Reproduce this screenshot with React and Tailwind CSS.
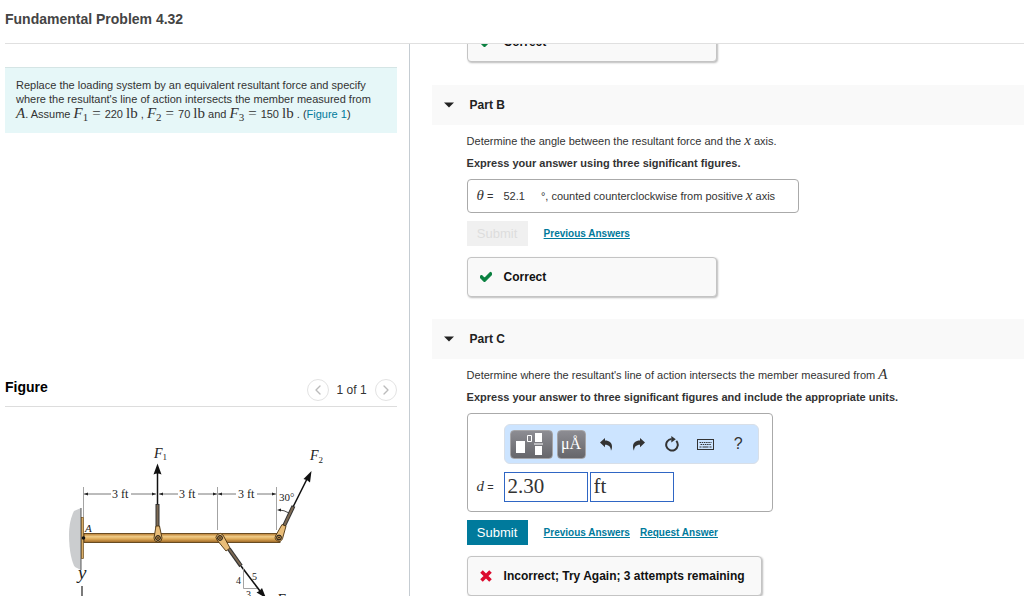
import { useState } from "react";
import { FaCheck } from "react-icons/fa";
import { ChevronLeft, ChevronRight } from "lucide-react";

const M = ({ children, sub }) => (
  <span className="font-['Liberation_Serif',serif] text-[15px] leading-none">
    <i>{children}</i>
    {sub && <sub className="text-[11px] leading-none">{sub}</sub>}
  </span>
);

const Eq = () => <span className="mx-1 font-['Liberation_Serif',serif] text-[15px] leading-none">=</span>;

const Lb = () => <span className="font-['Liberation_Serif',serif] text-[15px] leading-none">lb</span>;

function PartHeader({ title }) {
  const [open, setOpen] = useState(true);
  return (
    <button
      type="button"
      aria-expanded={open}
      onClick={() => setOpen(!open)}
      className="flex h-10 w-full items-center gap-4 bg-[#f9f9f9] pl-3 text-left text-[12px] font-bold text-[#222]"
    >
      <svg viewBox="0 0 10 6" className="h-[6px] w-[10px]" aria-hidden="true">
        <path d="M0 0.5h10L5 5.5z" fill="#222" />
      </svg>
      {title}
    </button>
  );
}

function Feedback({ ok, className, children }) {
  return (
    <div
      className={`flex h-10 items-center gap-3 rounded border border-[#c4c4c4] bg-[#f9f9f9] pl-3 text-[12px] font-bold text-[#111] shadow-[1px_1px_2px_#bbb] ${className}`}
    >
      {ok ? (
        <FaCheck className="h-3 w-3 text-[#0a8040]" stroke="currentColor" strokeWidth="50" />
      ) : (
        <svg viewBox="0 0 12 12" className="h-3 w-3" aria-hidden="true">
          <path d="M1.5 1.5l9 9M10.5 1.5l-9 9" stroke="#dc0a2d" strokeWidth="3.6" />
        </svg>
      )}
      <span>{children}</span>
    </div>
  );
}

const linkClass = "text-[10px] font-bold text-[#007a9c] underline";

function Dim({ x1, x2, label, tx, gap }) {
  return (
    <g>
      <path d={`M${x1} 494H${gap[0]}M${gap[1]} 494H${x2}`} stroke="#555" strokeWidth="0.8" />
      <path d={`M${x1} 494l4 -1.6v3.2zM${x2} 494l-4 -1.6v3.2z`} fill="#222" />
      <text x={tx} y="498" fontSize="12">{label}</text>
    </g>
  );
}

function BeamFigure() {
  return (
    <svg
      width="392"
      height="220"
      viewBox="5 407 392 220"
      className="block font-['Liberation_Serif',serif]"
      fill="#222"
      role="img"
      aria-label="Beam with three applied forces"
    >
      <defs>
        <linearGradient id="beam" x1="0" y1="0" x2="0" y2="1">
          <stop offset="0" stopColor="#b5782c" />
          <stop offset="0.35" stopColor="#f0cc88" />
          <stop offset="0.6" stopColor="#dfab59" />
          <stop offset="1" stopColor="#9a6424" />
        </linearGradient>
      </defs>
      <path d="M81 508l-7 3c-3 6-5 14-5 24 0 16 3 28 6 32l6 3z" fill="#cbcdcf" />
      <path d="M81 508v62" stroke="#333" strokeWidth="0.8" />
      <rect x="81.5" y="517.5" width="2" height="41" fill="#d9ad66" stroke="#6b4a1c" strokeWidth="0.7" />
      <path d="M83.5 487v30M217.5 487v43M276.5 487v43" stroke="#999" strokeWidth="0.9" />
      <rect x="84" y="533.5" width="196" height="9" fill="url(#beam)" stroke="#5d4018" strokeWidth="0.9" />
      <circle cx="83.5" cy="538" r="1.8" fill="#111" />
      <text x="85" y="532" fontSize="11" fontStyle="italic">A</text>

      <Dim x1={84} x2={156} gap={[111, 131]} tx={112} label="3 ft" />
      <Dim x1={159} x2={217} gap={[178, 198]} tx={179} label="3 ft" />
      <Dim x1={218} x2={276} gap={[236, 257]} tx={238} label="3 ft" />

      <path d="M157.5 505V472" stroke="#111" strokeWidth="1.5" />
      <path d="M157.5 463.5l4 11q-4 -2 -8 0z" fill="#111" />
      <path d="M157.5 504v24" stroke="#333" strokeWidth="4" />
      <path d="M157.5 505v22" stroke="#7d6a54" strokeWidth="2" />
      <path d="M156 526h3.5l2.500 12a3.700 3.700 0 0 1-8 0z" fill="#e9bd79" stroke="#49310f" strokeWidth="0.9" />
      <circle cx="158" cy="538" r="2.4" fill="#b98a48" stroke="#111" strokeWidth="1" />
      <circle cx="158" cy="538" r="0.8" fill="#111" />

      <path d="M241 566l19 25" stroke="#111" strokeWidth="1.6" />
      <path d="M266 598l-9.500-5.500q3.500-1.500 5.500-4.500z" fill="#111" />
      <path d="M229 549l12 17" stroke="#333" strokeWidth="4" />
      <path d="M229 549l11.500 16" stroke="#7d6a54" strokeWidth="2" />
      <path d="M217 540a3.700 3.700 0 0 1 6-5l7 13-4 3z" fill="#e9bd79" stroke="#49310f" strokeWidth="0.9" />
      <circle cx="220" cy="538" r="2.4" fill="#b98a48" stroke="#111" strokeWidth="1" />
      <circle cx="220" cy="538" r="0.8" fill="#111" />
      <path d="M243.500 568v20.500H257" fill="none" stroke="#999" strokeWidth="0.9" />

      <path d="M293 507l14-28" stroke="#111" strokeWidth="1.6" />
      <path d="M311.500 471l-1.500 11.500q-2.500-3-6.500-3.500z" fill="#111" />
      <path d="M284 526l9.500-20" stroke="#333" strokeWidth="4" />
      <path d="M284.500 525l8.500-18" stroke="#7d6a54" strokeWidth="2" />
      <path d="M275.500 536l6.500-11.500 4 1.700-3.500 12.500a3.700 3.700 0 0 1-7-2.700z" fill="#e9bd79" stroke="#49310f" strokeWidth="0.9" />
      <circle cx="279" cy="537.500" r="2.4" fill="#b98a48" stroke="#111" strokeWidth="1" />
      <circle cx="279" cy="537.500" r="0.8" fill="#111" />
      <path d="M289 513q-5-3-10-3" fill="none" stroke="#333" strokeWidth="0.9" />
      <path d="M277 510l4-1.600v3.200z" />

      <text x="279" y="501" fontSize="11">30°</text>
      <text x="154" y="458" fontSize="14"><tspan fontStyle="italic">F</tspan><tspan fontSize="9" dy="2">1</tspan></text>
      <text x="310" y="460" fontSize="14"><tspan fontStyle="italic">F</tspan><tspan fontSize="9" dy="3">2</tspan></text>
      <text x="277" y="604" fontSize="14"><tspan fontStyle="italic">F</tspan><tspan fontSize="9" dy="3">3</tspan></text>
      <text x="236" y="584" fontSize="10">4</text>
      <text x="252" y="580" fontSize="10">5</text>
      <text x="246" y="598" fontSize="10">3</text>
      <text x="78" y="579" fontSize="19" fontStyle="italic">y</text>
      <path d="M82 586v30" stroke="#222" strokeWidth="1.2" />
    </svg>
  );
}

function Toolbar() {
  const tool = "flex w-[33px] items-center justify-center";
  return (
    <div className="flex h-10 w-[255px] items-center rounded-md border border-[#d8dfe8] bg-[#cce4ff] pl-[5px] text-[#333]">
      <button type="button" aria-label="Templates" className="h-[29px] w-[43px] rounded border border-[#a5a5a8] bg-gradient-to-b from-[#8d8d93] to-[#66666a]">
        <svg viewBox="1 1 41 27" className="h-full w-full" fill="#fff">
          <path d="M6 11h9v12H6zM25 3h7v9h-7zM25 16h7v9h-7zM24 13.500h9v1h-9z" />
          <path d="M17.500 5.500h4v6h-4z" fill="none" stroke="#fff" />
        </svg>
      </button>
      <button type="button" aria-label="Units" className="mx-1 h-[29px] w-[29px] rounded border border-[#a5a5a8] bg-gradient-to-b from-[#8d8d93] to-[#66666a] font-['Liberation_Serif',serif] text-[16px] leading-none text-white">
        μÅ
      </button>
      <button type="button" aria-label="Undo" className={tool}>
        <svg viewBox="0 0 12 13" className="h-[13px] w-3" fill="#333">
          <path d="M0 4.500L5 0v2.600C9.500 2.600 12 5 12 8.500c0 1.800-.4 3.200-1 4.200C10.800 9 9 6.700 5 6.700v2.600z" />
        </svg>
      </button>
      <button type="button" aria-label="Redo" className={tool}>
        <svg viewBox="0 0 12 13" className="h-[13px] w-3" fill="#333">
          <path d="M12 4.500L7 0v2.600C2.500 2.600 0 5 0 8.500c0 1.800.4 3.200 1 4.200C1.200 9 3 6.700 7 6.700v2.600z" />
        </svg>
      </button>
      <button type="button" aria-label="Reset" className={tool}>
        <svg viewBox="0 0 16 16" className="h-4 w-4">
          <path d="M12.300 4.900a5.800 5.800 0 1 1-4.800-1.900" fill="none" stroke="#333" strokeWidth="2" />
          <path d="M7.300 0l4.500 3.200-4.500 3.200z" fill="#333" />
        </svg>
      </button>
      <button type="button" aria-label="Keyboard" className={tool}>
        <svg viewBox="0 0 17 12" className="mt-[2px] h-3 w-[17px]" fill="none" stroke="#333">
          <rect x="0.500" y="0.500" width="16" height="10" />
          <path d="M2.500 3.500h12M3.500 5.500h11" strokeDasharray="1.500 0.700" />
          <path d="M2.500 8h2M5.500 8h6M12.500 8h2" />
        </svg>
      </button>
      <button type="button" aria-label="Help" className={`${tool} text-[16px] leading-none`}>?</button>
    </div>
  );
}

export default function App() {
  const [value, setValue] = useState("2.30");
  const [units, setUnits] = useState("ft");
  const field =
    "h-[30px] w-[84px] border border-[#2f66c4] bg-white px-[3px] font-['Liberation_Serif',serif] text-[21px] text-[#333] outline-none";

  return (
    <div className="flex h-screen flex-col overflow-hidden bg-white font-['Liberation_Sans',Arial,sans-serif] text-[12px] text-[#333]">
      <header className="ml-[5px] h-11 shrink-0 border-b border-[#e0e0e0] pt-[9px]">
        <h1 className="text-[14px] leading-5 font-bold text-[#444]">Fundamental Problem 4.32</h1>
      </header>

      <div className="flex min-h-0 flex-1">
        <aside className="w-2/5 shrink-0 overflow-hidden border-r border-[#c5ccd2] pt-[23px] pr-3 pl-[5px]">
          <div className="min-h-[302px]">
            <p className="border-t border-[#d5e5e5] bg-[#e6f7f8] px-[11px] pt-[10px] pb-3 text-[11px] leading-[14px]">
              Replace the loading system by an equivalent resultant force and specify where the
              resultant's line of action intersects the member measured from <M>A</M>. Assume{" "}
              <M sub="1">F</M><Eq />220 <Lb /> , <M sub="2">F</M><Eq />70 <Lb /> and{" "}
              <M sub="3">F</M><Eq />150 <Lb /> . (<a href="#figure" className="text-[#007a9c]">Figure 1</a>)
            </p>
          </div>
          <div id="figure" className="flex h-[38px] items-center justify-between border-b border-[#ddd]">
            <h2 className="text-[14px] font-bold text-black">Figure</h2>
            <div className="flex items-center gap-2 pt-1 text-[12px]">
              <button type="button" aria-label="Previous figure" className="flex h-[22px] w-[22px] items-center justify-center rounded-full border border-[#e3e3e3] text-[#bbb]">
                <ChevronLeft size={16} />
              </button>
              <span>1 of 1</span>
              <button type="button" aria-label="Next figure" className="flex h-[22px] w-[22px] items-center justify-center rounded-full border border-[#e3e3e3] text-[#bbb]">
                <ChevronRight size={16} />
              </button>
            </div>
          </div>
          <BeamFigure />
        </aside>

        <main className="min-w-0 flex-1 overflow-hidden pl-[22px]">
          <div className="-mt-[22px] pb-[23px] pl-[35px]">
            <Feedback ok className="w-[250px]">Correct</Feedback>
          </div>

          <section>
            <PartHeader title="Part B" />
            <div className="pt-2 pb-[22px] pl-[35px]">
              <p className="text-[11px] leading-4">
                Determine the angle between the resultant force and the <M>x</M> axis.
              </p>
              <p className="mt-[6px] text-[11px] leading-4 font-bold">
                Express your answer using three significant figures.
              </p>
              <div className="mt-2 flex h-[34px] w-[332px] items-center rounded border border-[#aaa] px-[9px] text-[11px]">
                <span><M>θ</M> =</span>
                <span className="ml-[10px]">52.1</span>
                <span className="ml-4">
                  °, counted counterclockwise from positive <M>x</M> axis
                </span>
              </div>
              <div className="mt-2 flex items-center gap-4">
                <button type="button" disabled className="h-[25px] w-[61px] bg-[#f0f0f0] text-[13px] text-[#ddd]">Submit</button>
                <a href="#previous-b" className={linkClass}>Previous Answers</a>
              </div>
              <Feedback ok className="mt-[11px] w-[250px]">Correct</Feedback>
            </div>
          </section>

          <section>
            <PartHeader title="Part C" />
            <div className="pt-2 pl-[35px]">
              <p className="text-[11px] leading-4">
                Determine where the resultant's line of action intersects the member measured from <M>A</M>
              </p>
              <p className="mt-[6px] text-[11px] leading-4 font-bold">
                Express your answer to three significant figures and include the appropriate units.
              </p>
              <div className="mt-2 h-[99px] w-[306px] rounded border border-[#aaa] pt-[10px] pl-[9px]">
                <div className="pl-[27px]">
                  <Toolbar />
                </div>
                <div className="mt-2 flex items-center gap-[2px]">
                  <label htmlFor="d-value" className="w-[25px] text-[11px]"><M>d</M> =</label>
                  <input id="d-value" className={field} value={value} onChange={(e) => setValue(e.target.value)} />
                  <input aria-label="Units" className={field} value={units} onChange={(e) => setUnits(e.target.value)} />
                </div>
              </div>
              <div className="mt-2 flex items-center gap-4">
                <button type="button" className="h-[25px] w-[61px] bg-[#007a9c] text-[13px] text-white">Submit</button>
                <div className="flex gap-[10px]">
                  <a href="#previous-c" className={linkClass}>Previous Answers</a>
                  <a href="#request" className={linkClass}>Request Answer</a>
                </div>
              </div>
              <Feedback className="mt-[11px] w-[295px]">Incorrect; Try Again; 3 attempts remaining</Feedback>
            </div>
          </section>
        </main>
      </div>
    </div>
  );
}
